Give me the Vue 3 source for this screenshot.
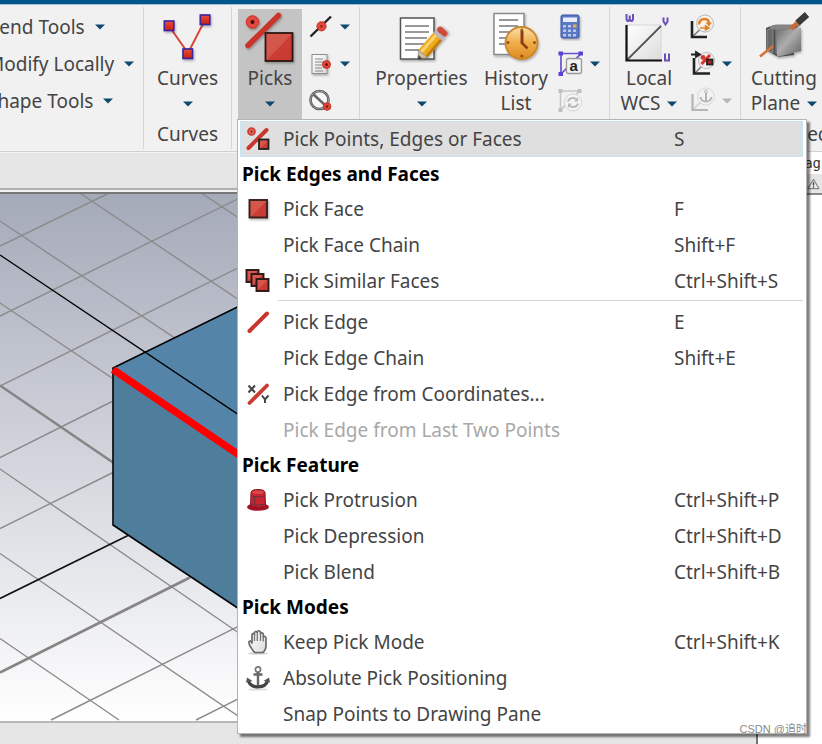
<script setup>
const tools = ['Bend Tools', 'Modify Locally', 'Shape Tools']

const menu = [
  { kind: 'item', label: 'Pick Points, Edges or Faces', key: 'S', icon: 'points', active: true },
  { kind: 'header', label: 'Pick Edges and Faces' },
  { kind: 'item', label: 'Pick Face', key: 'F', icon: 'face' },
  { kind: 'item', label: 'Pick Face Chain', key: 'Shift+F' },
  { kind: 'item', label: 'Pick Similar Faces', key: 'Ctrl+Shift+S', icon: 'similar' },
  { kind: 'separator' },
  { kind: 'item', label: 'Pick Edge', key: 'E', icon: 'edge' },
  { kind: 'item', label: 'Pick Edge Chain', key: 'Shift+E' },
  { kind: 'item', label: 'Pick Edge from Coordinates...', icon: 'coords' },
  { kind: 'item', label: 'Pick Edge from Last Two Points', disabled: true },
  { kind: 'header', label: 'Pick Feature' },
  { kind: 'item', label: 'Pick Protrusion', key: 'Ctrl+Shift+P', icon: 'protrusion' },
  { kind: 'item', label: 'Pick Depression', key: 'Ctrl+Shift+D' },
  { kind: 'item', label: 'Pick Blend', key: 'Ctrl+Shift+B' },
  { kind: 'header', label: 'Pick Modes' },
  { kind: 'item', label: 'Keep Pick Mode', key: 'Ctrl+Shift+K', icon: 'hand' },
  { kind: 'item', label: 'Absolute Pick Positioning', icon: 'anchor' },
  { kind: 'item', label: 'Snap Points to Drawing Pane' },
]
</script>

<template>
  <div class="app">
    <svg class="defs" width="0" height="0" aria-hidden="true">
      <defs>
        <linearGradient id="red" x1="0" y1="0" x2="1" y2="1">
          <stop offset="0" stop-color="#d9594f" /><stop offset=".5" stop-color="#d4554b" />
          <stop offset=".51" stop-color="#cb3d34" /><stop offset="1" stop-color="#c9382f" />
        </linearGradient>
        <linearGradient id="node" x1="0" y1="0" x2="0" y2="1">
          <stop offset="0" stop-color="#e8503a" /><stop offset="1" stop-color="#c81e12" />
        </linearGradient>
        <linearGradient id="paper" x1="0" y1="0" x2="1" y2="1">
          <stop offset="0" stop-color="#fff" /><stop offset="1" stop-color="#dcdcdc" />
        </linearGradient>
        <linearGradient id="gold" x1="0" y1="0" x2="0" y2="1">
          <stop offset="0" stop-color="#fbe0a8" /><stop offset=".5" stop-color="#f0ad4a" /><stop offset="1" stop-color="#dd8a1c" />
        </linearGradient>
        <linearGradient id="steel" x1="0" y1="0" x2="1" y2="1">
          <stop offset="0" stop-color="#6c6c6c" /><stop offset=".45" stop-color="#adadad" /><stop offset="1" stop-color="#626262" />
        </linearGradient>
        <linearGradient id="sky" x1="0" y1="0" x2="0" y2="1">
          <stop offset="0" stop-color="#a5aab9" /><stop offset="1" stop-color="#ffffff" />
        </linearGradient>
        <filter id="soft" x="-30%" y="-30%" width="160%" height="160%">
          <feDropShadow dx="1" dy="1.5" stdDeviation="1" flood-color="#000" flood-opacity=".3" />
        </filter>
        <g id="lines" stroke="#777" stroke-width="1.300">
          <path d="M0 0h24M0 6h24M0 12h22M0 18h20M0 24h16" />
        </g>
      </defs>
    </svg>

    <div class="titlebar"></div>

    <header class="ribbon">
      <section class="group tools">
        <button v-for="t in tools" :key="t" class="tool">
          <span>{{ t }}</span>
          <svg class="arrow" viewBox="0 0 10 6"><path d="M0 .5h10L5 5.500z" /></svg>
        </button>
      </section>

      <section class="group curves">
        <button class="big">
          <svg class="art" viewBox="156 9 64 57">
            <path d="M169 26L188 53L205 20" fill="none" stroke="#d8473d" stroke-width="2" />
            <g fill="url(#node)" stroke="#3a22a0" stroke-width="1.600" filter="url(#soft)">
              <rect x="164.300" y="21" width="9.500" height="9.500" />
              <rect x="200.300" y="15" width="9.500" height="9.500" />
              <rect x="183" y="49" width="9.500" height="9.500" />
            </g>
          </svg>
          <span class="line">Curves</span>
          <span class="line"><svg class="arrow" viewBox="0 0 10 6"><path d="M0 .5h10L5 5.500z" /></svg></span>
        </button>
        <span class="caption">Curves</span>
      </section>

      <section class="group picks">
        <button class="big pressed" aria-haspopup="menu" aria-expanded="true">
          <svg class="art" viewBox="238 9 64 57">
            <g filter="url(#soft)">
              <path d="M248 45.500L278.500 15.500" stroke="#c8352c" stroke-width="5.500" stroke-linecap="round" />
              <circle cx="252.500" cy="22" r="6.300" fill="#e04a3e" stroke="#d13228" />
              <circle cx="252.500" cy="22" r="2" fill="#3a0d0a" />
              <rect x="265.500" y="33" width="27" height="28" fill="url(#red)" stroke="#2d1513" stroke-width="1.800" />
            </g>
          </svg>
          <span class="line">Picks</span>
          <span class="line"><svg class="arrow" viewBox="0 0 10 6"><path d="M0 .5h10L5 5.500z" /></svg></span>
        </button>
        <div class="smalls">
          <button class="small" aria-label="Pick point">
            <svg class="glyph" viewBox="306 13 28 28">
              <path d="M310.500 36.500L331 16.500" stroke="#222" stroke-width="2.400" />
              <circle cx="321.500" cy="26.300" r="4.600" fill="#e2483b" stroke="#c93227" />
              <circle cx="321.500" cy="26.300" r="1.300" fill="#a51f16" />
            </svg>
            <svg class="arrow" viewBox="0 0 10 6"><path d="M0 .5h10L5 5.500z" /></svg>
          </button>
          <button class="small" aria-label="Pick list">
            <svg class="glyph" viewBox="306 50 28 28">
              <rect x="312" y="54.500" width="15" height="19" fill="url(#paper)" stroke="#8d8d8d" filter="url(#soft)" />
              <path d="M315 59h8M315 62h8M315 65h7M315 68h7M315 71h8" stroke="#888" />
              <circle cx="326.500" cy="64.500" r="4" fill="#df4639" stroke="#c93227" />
              <circle cx="326.500" cy="64.500" r="1.300" fill="#4a0f0b" />
            </svg>
            <svg class="arrow" viewBox="0 0 10 6"><path d="M0 .5h10L5 5.500z" /></svg>
          </button>
          <button class="small" aria-label="Clear picks">
            <svg class="glyph" viewBox="306 87 28 28">
              <circle cx="319.500" cy="100" r="9" fill="#f7f7f7" stroke="#555" stroke-width="2.600" />
              <path d="M313 94L326 106" stroke="#666" stroke-width="2.400" />
              <circle cx="319.500" cy="100" r="9" fill="none" stroke="#ccc" stroke-width=".6" />
              <circle cx="327" cy="106.500" r="3.800" fill="#df4639" stroke="#c93227" />
              <circle cx="327" cy="106.500" r="1.200" fill="#7a1710" />
            </svg>
          </button>
        </div>

        <ul class="menu" role="menu" aria-label="Picks">
          <template v-for="(m, i) in menu" :key="i">
            <li v-if="m.kind === 'header'" class="menu-header" role="presentation">{{ m.label }}</li>
            <li v-else-if="m.kind === 'separator'" class="menu-separator" role="separator"></li>
            <li v-else role="none">
              <button class="menu-item" :class="{ active: m.active }" role="menuitem" :disabled="m.disabled">
                <svg class="menu-icon" viewBox="0 0 26 26">
                  <template v-if="m.icon === 'points'">
                    <path d="M3.500 22L21.500 4" stroke="#c8352c" stroke-width="4" stroke-linecap="round" />
                    <circle cx="6.500" cy="5.500" r="3.500" fill="#e2665c" stroke="#cb3a30" stroke-width="1.700" />
                    <circle cx="6.500" cy="5.500" r="1" fill="#7a1710" />
                    <rect x="14" y="13.500" width="9.500" height="9.500" fill="url(#red)" stroke="#222" stroke-width="1.800" />
                  </template>
                  <rect v-else-if="m.icon === 'face'" x="4.500" y="4" width="17.500" height="17.500" fill="url(#red)" stroke="#3a1f1d" stroke-width="1.900" filter="url(#soft)" />
                  <g v-else-if="m.icon === 'similar'" fill="url(#red)" stroke="#2a1715" stroke-width="1.900">
                    <rect x="1.500" y="2" width="12" height="12" />
                    <rect x="6.500" y="6" width="12" height="12" />
                    <rect x="11.500" y="11" width="12" height="12" />
                  </g>
                  <path v-else-if="m.icon === 'edge'" d="M4.500 22L22 4.500" stroke="#c8352c" stroke-width="4" stroke-linecap="round" />
                  <template v-else-if="m.icon === 'coords'">
                    <path d="M4.500 22L22 4.500" stroke="#cc3a30" stroke-width="3.800" stroke-linecap="round" />
                    <path d="M3.500 4.500L10 11.500M10 4.500L3.500 11.500M17 14.500L20 18.500L23.500 14.500M20 18.500V22" fill="none" stroke="#444" stroke-width="2" />
                  </template>
                  <template v-else-if="m.icon === 'protrusion'">
                    <ellipse cx="13" cy="20" rx="11" ry="3.800" fill="#a51225" />
                    <path d="M5.500 19L6 5.500Q6.500 2.500 13 2.500T20 5.500L20.500 19Q13 22 5.500 19z" fill="#c9242f" stroke="#8c1522" />
                    <ellipse cx="13" cy="5.200" rx="6" ry="1.800" fill="#d94a4c" />
                    <path d="M6.500 9Q13 11 19.500 9M6 17Q13 19 20 17M9.500 10V18" fill="none" stroke="#6c2f3c" stroke-width="1.200" />
                  </template>
                  <template v-else-if="m.icon === 'hand'">
                    <ellipse cx="13" cy="24.500" rx="10" ry="1" fill="#ccc" />
                    <path d="M7 20Q3.500 16 4 12.500Q5.500 11 7 14V5.500Q8 3.500 9.500 5.500V3.500Q10.800 1.500 12.300 3.500V2.500Q14 .8 15.500 3V4.500Q17 3 18.300 5V8Q20.500 6.500 21 9V16Q21 21 18 23.500H10Q8 22.500 7 20z" fill="url(#paper)" stroke="#6c6c6c" stroke-width="1.700" stroke-linejoin="round" />
                    <path d="M9.500 5.500V12M12.300 4V12M15.500 4V12M18.300 7V12.500" stroke="#777" stroke-width="1.300" />
                  </template>
                  <template v-else-if="m.icon === 'anchor'">
                    <ellipse cx="13" cy="24.500" rx="10" ry="1" fill="#ddd" />
                    <circle cx="13" cy="4.500" r="2.600" fill="none" stroke="#777" stroke-width="1.700" />
                    <path d="M8.500 9.500H17.500M13 7V22" stroke="#666" stroke-width="2.400" />
                    <path d="M3.500 16Q5 21.500 13 22Q21 21.500 22.500 16" fill="none" stroke="#444" stroke-width="3.200" />
                    <path d="M1 17.500L2 12.500L7.500 16zM25 17.500L24 12.500L18.500 16z" fill="#555" />
                  </template>
                </svg>
                <span class="menu-label">{{ m.label }}</span>
                <kbd v-if="m.key" class="menu-key">{{ m.key }}</kbd>
              </button>
            </li>
          </template>
        </ul>
      </section>

      <section class="group edit">
        <button class="big wide">
          <svg class="art" viewBox="389 9 64 57">
            <rect x="399.500" y="18" width="33.500" height="41" fill="#fff" stroke="#555" stroke-width="1.500" filter="url(#soft)" />
            <use href="#lines" transform="translate(404 26)" />
            <g transform="translate(417 59.500) rotate(-49)" filter="url(#soft)">
              <path d="M0 0L8 -6V6z" fill="#d5c0a0" stroke="#666" stroke-width=".8" />
              <path d="M0 0L3.500 -2.600V2.600z" fill="#333" />
              <rect x="8" y="-6" width="22" height="12" fill="#f0a91f" />
              <path d="M8 -2.500H30" stroke="#fbd36a" stroke-width="3" />
              <path d="M8 4.500H30" stroke="#b8770e" stroke-width="2.400" />
              <rect x="30" y="-6" width="4" height="12" fill="#b9b9b9" />
              <rect x="34" y="-6" width="6" height="12" rx="3" fill="#cf4a3a" />
            </g>
          </svg>
          <span class="line">Properties</span>
          <span class="line"><svg class="arrow" viewBox="0 0 10 6"><path d="M0 .5h10L5 5.500z" /></svg></span>
        </button>
        <button class="big">
          <svg class="art" viewBox="483 9 64 57">
            <rect x="493" y="13.500" width="30" height="41" fill="#fff" stroke="#8a8a8a" stroke-width="1.500" filter="url(#soft)" />
            <use href="#lines" transform="translate(498 20) scale(.8 1)" />
            <circle cx="520.500" cy="43" r="16" fill="url(#gold)" stroke="#c9872f" stroke-width="1.800" filter="url(#soft)" />
            <path d="M521 31V42.500" stroke="#8a3f14" stroke-width="3" />
            <path d="M520 42L526.500 48.500" stroke="#8a3f14" stroke-width="2.500" />
            <g fill="#9a5418"><circle cx="520.800" cy="30" r="1.500" /><circle cx="520.800" cy="56" r="1.600" /><circle cx="507" cy="42.500" r="1.600" /><circle cx="533.500" cy="42.500" r="1.600" /></g>
          </svg>
          <span class="line">History</span>
          <span class="line">List</span>
        </button>
        <div class="smalls">
          <button class="small" aria-label="Calculator">
            <svg class="glyph" viewBox="556 13 28 28">
              <rect x="561" y="15" width="18" height="23" rx="1.500" fill="#5a78c4" stroke="#3d55a0" filter="url(#soft)" />
              <rect x="563" y="17.500" width="14" height="4.500" fill="#e8eefb" />
              <g fill="#b9c8ee">
                <rect x="563" y="25" width="3" height="2.500" /><rect x="568" y="25" width="3" height="2.500" />
                <rect x="563" y="29.500" width="3" height="2.500" /><rect x="568" y="29.500" width="3" height="2.500" /><rect x="573" y="29.500" width="3" height="2.500" />
                <rect x="563" y="34" width="3" height="2.500" /><rect x="568" y="34" width="3" height="2.500" /><rect x="573" y="34" width="3" height="2.500" />
              </g>
              <rect x="573" y="24.500" width="3.500" height="3" fill="#e9b04c" />
            </svg>
          </button>
          <button class="small" aria-label="Parameters">
            <svg class="glyph" viewBox="556 50 28 28">
              <path d="M561 74V53.500H581L561 74" fill="none" stroke="#6a50d0" stroke-width="1.700" />
              <path d="M558.500 51.500h4.500v4h-4.500zM578.500 51.500h4.500v4h-4.500zM558.500 72h4.500v4h-4.500z" fill="#5b40cf" />
              <rect x="566.500" y="58.500" width="15" height="15" rx="2" fill="#f2f2f2" stroke="#999" stroke-width="1.300" />
              <text x="569.500" y="70.500" class="glyph-text">a</text>
            </svg>
            <svg class="arrow" viewBox="0 0 10 6"><path d="M0 .5h10L5 5.500z" /></svg>
          </button>
          <button class="small" aria-label="Update parameters" disabled>
            <svg class="glyph" viewBox="556 87 28 28" fill="none" stroke="#b9b9b9">
              <path d="M560.500 110V91H579.500L560.500 110" stroke="#c6c6c6" stroke-width="1.500" />
              <path d="M558.500 89h4v4h-4zM577.500 89h4v4h-4zM558.500 108h4v4h-4z" fill="#bfbfbf" stroke="none" />
              <circle cx="573" cy="102.500" r="8.500" fill="#f4f4f4" stroke="#d6d6d6" />
              <path d="M568 101.500Q569 98 573 98Q575 98 577 99.500M578 103.500Q577 107 573 107Q571 107 569 105.500" stroke-width="2" />
              <path d="M578 97V101.500H574zM568 108V103.500H572z" fill="#b9b9b9" stroke="none" />
            </svg>
          </button>
        </div>
      </section>

      <section class="group wcs">
        <button class="big">
          <svg class="art" viewBox="617 9 64 57">
            <rect x="627" y="25" width="34" height="35" fill="url(#paper)" stroke="#d6d6d6" />
            <path d="M627 60L661 26" stroke="#555" stroke-width="1.800" />
            <path d="M626.500 25V60.500H662" fill="none" stroke="#111" stroke-width="2.200" />
            <g fill="none" stroke="#6a4fb5" stroke-width="2">
              <path d="M626.500 14V19.500L627.500 21H628.500L629.700 19V15.500V19L631 21H632L633 19.500V14" />
              <path d="M663.500 17.500V21.500L665.500 24.500L667.500 21.500V17.500" />
              <path d="M665 53.500V60.500H669V53.500" />
            </g>
          </svg>
          <span class="line">Local</span>
          <span class="line">WCS<svg class="arrow" viewBox="0 0 10 6"><path d="M0 .5h10L5 5.500z" /></svg></span>
        </button>
        <div class="smalls">
          <button class="small" aria-label="Rotate WCS">
            <svg class="glyph" viewBox="688 13 28 28">
              <path d="M692 37L707 23" stroke="#777" stroke-width="1.500" />
              <path d="M692 21V37H707" fill="none" stroke="#222" stroke-width="2.600" />
              <circle cx="705" cy="23.500" r="8.500" fill="#f8f3ee" fill-opacity=".92" stroke="#b8b8b8" />
              <path d="M699 24.500Q699.500 19 704.500 19Q708.500 19 709 23" fill="none" stroke="#df832c" stroke-width="2.600" />
              <path d="M705.500 22.500H712L709 26.500z" fill="#df832c" />
              <path d="M700 28H706M705.500 26L709 28L705.500 30z" fill="#df832c" stroke="#df832c" stroke-width="1.500" />
            </svg>
          </button>
          <button class="small" aria-label="Align WCS">
            <svg class="glyph" viewBox="688 50 28 28">
              <path d="M694 74L708 60" stroke="#777" stroke-width="1.500" />
              <path d="M694 58V73.500H710" fill="none" stroke="#222" stroke-width="2.600" />
              <circle cx="706.500" cy="60.500" r="8" fill="#f6eded" fill-opacity=".92" stroke="#bbb" />
              <path d="M691 54.500H697M696 52L700 54.500L696 57z" fill="#222" stroke="#222" stroke-width="1.800" />
              <path d="M701.500 64L710 55" stroke="#d4362b" stroke-width="3" />
              <circle cx="703" cy="57.500" r="2.400" fill="#d4362b" />
              <rect x="707" y="59.500" width="5.500" height="5" fill="#b3261d" stroke="#222" stroke-width="1.800" />
            </svg>
            <svg class="arrow" viewBox="0 0 10 6"><path d="M0 .5h10L5 5.500z" /></svg>
          </button>
          <button class="small" aria-label="Fix WCS" disabled>
            <svg class="glyph" viewBox="688 87 28 28" fill="none" stroke="#b5b5b5">
              <path d="M692.500 110L706 97" stroke="#d0d0d0" stroke-width="1.500" />
              <path d="M692.500 94V110H708" stroke-width="2.200" />
              <circle cx="706" cy="96.500" r="8.500" fill="#f2f2f2" stroke="#d9d9d9" />
              <circle cx="706" cy="91.500" r="1.500" />
              <path d="M706 93V101.500M700.500 97Q701 101.500 706 101.500T711.500 97" stroke-width="2" />
            </svg>
            <svg class="arrow" viewBox="0 0 10 6"><path d="M0 .5h10L5 5.500z" /></svg>
          </button>
        </div>
      </section>

      <section class="group cutting">
        <button class="big">
          <svg class="art" viewBox="752 9 64 57">
            <g filter="url(#soft)">
              <path d="M766 28L774 25H800L794 30V55L778 57L766 50z" fill="#4c4c4c" />
              <path d="M767 30L773 28V53L767 50zM776 30V54" fill="#6b6b6b" stroke="#8a8a8a" />
              <path d="M776 30L801 28V51L777 57z" fill="url(#steel)" />
              <path d="M768 27L776 24.500H801L792 29L776 30z" fill="#858585" />
            </g>
            <path d="M791 29L797.500 22.500" stroke="#cc6a35" stroke-width="4.500" />
            <path d="M797.500 23L807 14.500" stroke="#3a3a3a" stroke-width="6.500" />
            <path d="M760 56.500L773 46" stroke="#d2733e" stroke-width="2.600" />
          </svg>
          <span class="line">Cutting</span>
          <span class="line">Plane<svg class="arrow" viewBox="0 0 10 6"><path d="M0 .5h10L5 5.500z" /></svg></span>
        </button>
        <span class="caption end">ec</span>
      </section>
    </header>

    <div class="workspace">
      <main class="view">
        <div class="tabstrip"></div>
        <div class="canvas">
          <svg class="scene" role="img" aria-label="3D model view">
            <rect width="100%" height="100%" fill="url(#sky)" />
            <g transform="translate(0 -194)" fill="none">
              <g stroke="#8b8b8b" stroke-width="1.400">
                <path d="M202 193.500L260 232M80.500 193.500L260 314M0 221L260 395M0 303L260 477M0 469L260 647.500M0 553.500L260 731M0 638.500L119 720" />
                <path d="M108 193.500L0 246M260 188L0 316M260 257L0 386M112 401.500L0 457.500M113 472.500L0 528.500M260 615.500L51 720M260 688L196 720" />
              </g>
              <path d="M0 385.500L113 462.500M190 577.500L0 672.500" stroke="#858585" stroke-width="2.600" />
              <path d="M128 535.500L0 598.500" stroke="#111" stroke-width="1.600" />
              <path d="M113 368L260 296V470z" fill="#5485a8" />
              <path d="M113 368L260 468V623L113.500 525z" fill="#4f7e9c" />
              <path d="M260 296L113 368V525L260 623" stroke="#000" stroke-width="1.600" />
              <path d="M0 255L260 429" stroke="#000" stroke-width="1.400" />
              <path d="M113 369.500L237 453.500L260 469" stroke="#f00" stroke-width="7.500" />
            </g>
          </svg>
        </div>
        <footer class="status"></footer>
      </main>
      <aside class="dock">
        <div class="dock-title">ag</div>
        <div class="dock-bar">
          <svg class="warn" viewBox="0 0 14 12">
            <path d="M7 1L13 11H1z" fill="#eee" stroke="#888" stroke-width="1.200" stroke-linejoin="round" />
            <path d="M7 4V7.500M7 8.500V10" stroke="#444" stroke-width="1.500" />
          </svg>
        </div>
      </aside>
    </div>

    <div class="watermark">CSDN @追时</div>
  </div>
</template>

<style>
body {
  margin: 0;
}
</style>

<style scoped>
.app {
  position: relative;
  display: flex;
  flex-direction: column;
  min-height: 100vh;
  overflow: hidden;
  background: #f1f1f1;
  color: #444;
  font-family: "Noto Sans", "Open Sans", sans-serif;
  font-size: 19px;
}

.defs {
  position: absolute;
}

button {
  margin: 0;
  padding: 0;
  border: 0;
  background: none;
  color: inherit;
  font: inherit;
  text-align: left;
}

.titlebar {
  height: 4px;
  background: #00568b;
  border-bottom: 1px solid #a9bccb;
}

.ribbon {
  display: flex;
  box-sizing: border-box;
  height: 147px;
  padding: 2px 0;
  border-bottom: 1px solid #d0d0d0;
}

.group {
  position: relative;
  display: flex;
  flex-shrink: 0;
  box-sizing: border-box;
  padding-top: 2px;
  border-right: 1px solid #d6d6d6;
}

.tools {
  flex-direction: column;
  gap: 1px;
  width: 144px;
  overflow: hidden;
}

.tool {
  display: flex;
  align-items: center;
  gap: 10px;
  height: 36px;
  margin-left: -13px;
  white-space: nowrap;
}

.arrow {
  flex-shrink: 0;
  width: 10px;
  height: 6px;
  fill: #0b4a6c;
}

.curves {
  flex-direction: column;
  align-items: center;
  width: 88px;
}

.picks {
  width: 128px;
  padding-left: 6px;
}

.edit {
  width: 250px;
  padding-left: 7px;
}

.wcs {
  width: 131px;
}

.cutting {
  flex-direction: column;
  width: 86px;
  border-right: 0;
}

.big {
  display: flex;
  flex-direction: column;
  align-items: center;
  flex-shrink: 0;
  min-width: 64px;
  height: 110px;
}

.edit .big {
  min-width: 80px;
}

.edit .wide {
  min-width: 109px;
}

.wcs .big {
  min-width: 78px;
}

.cutting .big {
  min-width: 86px;
}

.pressed {
  background: #c4c4c4;
}

.art {
  width: 64px;
  height: 57px;
}

.line {
  display: flex;
  align-items: center;
  gap: 7px;
  height: 25px;
  line-height: 25px;
}

.caption {
  height: 30px;
  line-height: 30px;
}

.end {
  align-self: flex-end;
}

.smalls {
  display: flex;
  flex-direction: column;
  gap: 1px;
}

.picks .smalls {
  padding-left: 4px;
}

.small {
  display: flex;
  align-items: center;
  gap: 6px;
  height: 36px;
}

.small:disabled .arrow {
  fill: #b5b5b5;
}

.glyph {
  width: 28px;
  height: 28px;
}

.glyph-text {
  font: bold 15px "Liberation Sans", sans-serif;
  fill: #222;
}

.menu {
  position: absolute;
  z-index: 2;
  top: 112px;
  left: 5px;
  box-sizing: border-box;
  width: 570px;
  margin: 0;
  padding: 1px 3px 1px 2px;
  border: 1px solid #b4b4b4;
  background: #fff;
  box-shadow: 3px 3px 2px rgba(0, 0, 0, 0.5);
  list-style: none;
}

.menu-item {
  display: flex;
  align-items: center;
  box-sizing: border-box;
  width: 100%;
  height: 36px;
  padding-left: 4px;
  border: 1px solid transparent;
  white-space: nowrap;
}

.menu-item:disabled {
  color: #a8a8a8;
}

.active {
  border-color: #c5e4f5;
  background: #dfdfdf;
}

.menu-icon {
  width: 26px;
  height: 26px;
  margin-right: 12px;
}

.menu-label {
  flex: 1;
}

.menu-key {
  width: 128px;
  font: inherit;
}

.menu-header {
  height: 34px;
  padding-left: 2px;
  color: #000;
  font-weight: 700;
  line-height: 34px;
}

.menu-separator {
  height: 5px;
  margin-left: 38px;
  background: linear-gradient(#d4d4d4, #d4d4d4) 0 1px / 100% 1px no-repeat;
}

.workspace {
  display: flex;
  flex: 1;
}

.view {
  display: flex;
  flex: 1;
  flex-direction: column;
}

.tabstrip {
  height: 35px;
  border-top: 1px solid #f4f4f4;
  border-bottom: 2px solid #b0b0b0;
  background: #e6e6e6;
}

.canvas {
  display: flex;
  flex: 1;
  margin-top: 2px;
  border-top: 2px solid #777;
  border-bottom: 2px solid #b8b8b8;
}

.scene {
  flex: 1;
  width: 100%;
}

.status {
  height: 21px;
  border-right: 2px solid #777;
  background: #e6e6e6;
}

.dock {
  width: 64px;
  background: #fff;
}

.dock-title {
  padding-right: 1px;
  color: #333;
  font-family: "DejaVu Sans Mono", monospace;
  font-size: 14px;
  line-height: 22px;
  text-align: right;
}

.dock-bar {
  display: flex;
  align-items: center;
  justify-content: flex-end;
  height: 19px;
  padding-right: 2px;
  border-bottom: 2px solid #888;
  background: #e6e6e6;
}

.warn {
  width: 13px;
  height: 12px;
}

.watermark {
  position: absolute;
  z-index: 3;
  right: 15px;
  bottom: 7px;
  color: #8a8a8a;
  font-family: "Liberation Sans", "Noto Sans CJK SC", sans-serif;
  font-size: 11px;
  line-height: 16px;
}
</style>
